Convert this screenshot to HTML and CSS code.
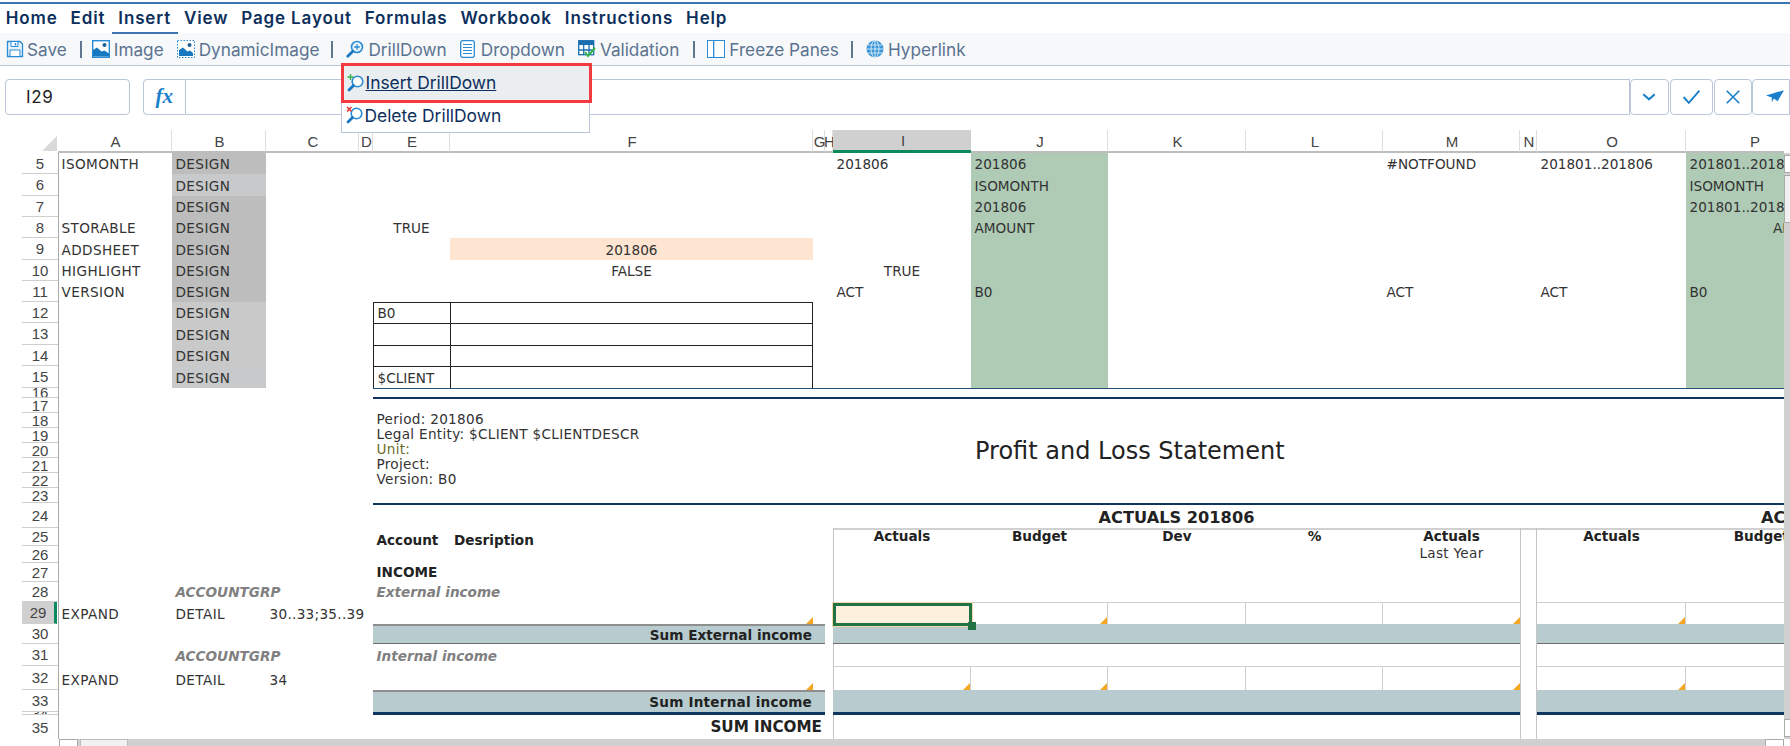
FILE: index.html
```html
<!DOCTYPE html>
<html lang="en">
<head>
<meta charset="utf-8">
<title>Workbook</title>
<link rel="stylesheet" href="styles.css">
</head>
<body>
<div class="app">
  <nav class="menu">
    <span class="menu-item">Home</span>
    <span class="menu-item">Edit</span>
    <span class="menu-item active">Insert</span>
    <span class="menu-item">View</span>
    <span class="menu-item">Page Layout</span>
    <span class="menu-item">Formulas</span>
    <span class="menu-item">Workbook</span>
    <span class="menu-item">Instructions</span>
    <span class="menu-item">Help</span>
  </nav>

  <div class="toolbar">
    <span class="tool t-save"><svg class="ico" viewBox="0 0 18 18"><path d="M1.500 1.500h12.500l2.500 2.500v12.500h-15z" fill="#e8f3fb" stroke="#2a8bd5" stroke-width="1.300"/><path d="M5 2v4.500h7V2" fill="#fff" stroke="#2a8bd5"/><path d="M4 16v-6h10v6" fill="#fff" stroke="#2a8bd5"/><path d="M9.500 3v2.500" stroke="#2a8bd5" stroke-width="1.500"/></svg>Save</span>
    <i class="sep s1"></i>
    <span class="tool t-image"><svg class="ico" viewBox="0 0 18 18"><rect x=".7" y=".7" width="16.600" height="16.600" fill="#fff" stroke="#2a8bd5" stroke-width="1.400"/><path d="M1 16.500V10l4-2.500 4.500 4 3-1 4.500 3v3z" fill="#1878bf"/><circle cx="12.500" cy="5" r="2" fill="#1a5f96"/></svg>Image</span>
    <span class="tool t-dyn"><svg class="ico" viewBox="0 0 18 18"><rect x=".5" y=".5" width="17" height="17" fill="#fff" stroke="#2a8bd5" stroke-dasharray="1.500 1.500"/><path d="M2 16V10l4-2.500 4.500 4 2.500-1 3 2.500v3z" fill="#1878bf"/><circle cx="12.500" cy="5" r="2" fill="#1a5f96"/></svg>DynamicImage</span>
    <i class="sep s2"></i>
    <span class="tool t-drill"><svg class="ico" viewBox="0 0 18 18"><circle cx="11" cy="7" r="5.500" fill="#e8f3fb" stroke="#2a8bd5" stroke-width="1.600"/><path d="M6.800 11.200 1.800 16.200" stroke="#1878bf" stroke-width="2.800" stroke-linecap="round"/><path d="M11 4.200v5.600M8.200 7h5.600" stroke="#2a8bd5" stroke-width="1.300"/></svg>DrillDown
      <div class="drop">
        <div class="drop-item hover"><svg class="ico" viewBox="0 0 18 18"><circle cx="10.500" cy="7.500" r="5.300" fill="#fff" stroke="#2a8bd5" stroke-width="1.600"/><path d="M6.500 11.500 2 16" stroke="#1878bf" stroke-width="2.800" stroke-linecap="round"/><path d="M3.500 0v6M.5 3h6" stroke="#35b44a" stroke-width="1.400"/></svg><span class="ul">Insert DrillDown</span></div>
        <div class="drop-item"><svg class="ico" viewBox="0 0 18 18"><circle cx="10.500" cy="7.500" r="5.300" fill="#fff" stroke="#2a8bd5" stroke-width="1.600"/><path d="M6.500 11.500 2 16" stroke="#1878bf" stroke-width="2.800" stroke-linecap="round"/><path d="M1 1l4.500 4.500M5.500 1 1 5.500" stroke="#e0352b" stroke-width="1.600"/></svg><span>Delete DrillDown</span></div>
      </div>
    </span>
    <span class="tool t-dd"><svg class="ico narrow" viewBox="0 0 15 18"><rect x=".7" y=".7" width="13.600" height="16.600" rx="2" fill="#fff" stroke="#2a8bd5" stroke-width="1.300"/><path d="M3 4.500h9M3 7.500h9M3 10.500h9M3 13.500h9" stroke="#2a8bd5" stroke-width="1.200"/></svg>Dropdown</span>
    <span class="tool t-val"><svg class="ico" viewBox="0 0 18 18"><rect x=".7" y=".7" width="15" height="14" fill="#fff" stroke="#1b6fb0" stroke-width="1.300"/><path d="M1 1h15v4H1z" fill="#1b6fb0"/><path d="M5.700 1v14M11 1v14M1 10h15" stroke="#1b6fb0" stroke-width="1.300"/><path d="M7 12l3 4 7-8" fill="none" stroke="#35b44a" stroke-width="2"/></svg>Validation</span>
    <i class="sep s3"></i>
    <span class="tool t-frz"><svg class="ico" viewBox="0 0 18 18"><rect x=".5" y=".5" width="17" height="17" fill="#fff" stroke="#2a8bd5"/><path d="M6.500 1v16" stroke="#2a8bd5"/><path d="M7.500 1v16" stroke="#bcdcf2"/></svg>Freeze Panes</span>
    <i class="sep s4"></i>
    <span class="tool t-link"><svg class="ico" viewBox="0 0 18 18"><circle cx="9" cy="9" r="8.500" fill="#3b96d8"/><g fill="none" stroke="#d9edf9" stroke-width=".9"><ellipse cx="9" cy="9" rx="4" ry="8.500"/><path d="M9 .5v17M.5 9h17M1.800 5h14.400M1.800 13h14.400"/></g></svg>Hyperlink</span>
  </div>

  <div class="fbar">
    <div class="namebox">I29</div>
    <div class="fx">fx</div>
    <div class="finput"></div>
    <div class="fbtn b1"><svg viewBox="0 0 14 14" class="fi"><path d="M2 4.500l5 4.500 5-4.500" fill="none" stroke="#1a7fcb" stroke-width="1.800"/></svg></div>
    <div class="fbtn b2"><svg viewBox="0 0 18 14" class="fi wide"><path d="M1.500 7l5 5.500L16.500 1" fill="none" stroke="#1a7fcb" stroke-width="1.800"/></svg></div>
    <div class="fbtn b3"><svg viewBox="0 0 14 14" class="fi"><path d="M1.500 1.500l11 11M12.500 1.500l-11 11" fill="none" stroke="#1a7fcb" stroke-width="1.400"/></svg></div>
    <div class="fbtn b4"><svg viewBox="0 0 18 14" class="fi wide"><path d="M0 5.500 17 .5 11 11 7.500 8.500 5.500 12V7.500z" fill="#1a7fcb"/></svg></div>
  </div>

  <div class="sheet">
    <div class="sheet-main">
      <div class="viewport">
        <div class="grid">
          <div class="corner"><i></i></div>
          <div class="ch ca">A</div><div class="ch cb">B</div><div class="ch cc">C</div><div class="ch cd">D</div><div class="ch ce">E</div><div class="ch cf">F</div><div class="ch cg">G</div><div class="ch chh">H</div><div class="ch ci sel"><span>I</span></div><div class="ch cj">J</div><div class="ch ck">K</div><div class="ch cl">L</div><div class="ch cm">M</div><div class="ch cn">N</div><div class="ch co">O</div><div class="ch cp">P</div>

          <div class="rh r5">5</div><div class="rh r6">6</div><div class="rh r7">7</div><div class="rh r8">8</div><div class="rh r9">9</div><div class="rh r10">10</div><div class="rh r11">11</div><div class="rh r12">12</div><div class="rh r13">13</div><div class="rh r14">14</div><div class="rh r15">15</div><div class="rh r16">16</div><div class="rh r17">17</div><div class="rh r18">18</div><div class="rh r19">19</div><div class="rh r20">20</div><div class="rh r21">21</div><div class="rh r22">22</div><div class="rh r23">23</div><div class="rh r24">24</div><div class="rh r25">25</div><div class="rh r26">26</div><div class="rh r27">27</div><div class="rh r28">28</div><div class="rh r29 rsel">29</div><div class="rh r30">30</div><div class="rh r31">31</div><div class="rh r32">32</div><div class="rh r33">33</div><div class="rh r34">34</div><div class="rh r35">35</div>

          <div class="left-rule"></div>

          <div class="fill green cj span-top"></div>
          <div class="fill green cp span-top"></div>
          <div class="fill peach cf r9"></div>

          <div class="c ls ca r5">ISOMONTH</div><div class="c ls ca r8">STORABLE</div><div class="c ls ca r9">ADDSHEET</div><div class="c ls ca r10">HIGHLIGHT</div><div class="c ls ca r11">VERSION</div>

          <div class="c ls cb r5 g1">DESIGN</div><div class="c ls cb r6 g2">DESIGN</div><div class="c ls cb r7 g1">DESIGN</div><div class="c ls cb r8 g1">DESIGN</div><div class="c ls cb r9 g1">DESIGN</div><div class="c ls cb r10 g1">DESIGN</div><div class="c ls cb r11 g1">DESIGN</div><div class="c ls cb r12 g3">DESIGN</div><div class="c ls cb r13 g3">DESIGN</div><div class="c ls cb r14 g3">DESIGN</div><div class="c ls cb r15 g2">DESIGN</div>

          <div class="c ce r8 mid">TRUE</div>
          <div class="c cf r9 mid">201806</div>
          <div class="c cf r10 mid">FALSE</div>
          <div class="c ci r10 mid">TRUE</div>

          <div class="c ci r5">201806</div><div class="c cj r5">201806</div><div class="c cm r5">#NOTFOUND</div><div class="c co r5">201801..201806</div><div class="c cp r5">201801..201806</div>
          <div class="c cj r6">ISOMONTH</div><div class="c cp r6">ISOMONTH</div>
          <div class="c cj r7">201806</div><div class="c cp r7">201801..201806</div>
          <div class="c cj r8">AMOUNT</div><div class="c cp r8 far">AMOUNT</div>
          <div class="c ci r11">ACT</div><div class="c cj r11">B0</div><div class="c cm r11">ACT</div><div class="c co r11">ACT</div><div class="c cp r11">B0</div>

          <div class="c ce r12 box">B0</div><div class="c cf r12 box boxr"></div>
          <div class="c ce r13 box"></div><div class="c cf r13 box boxr"></div>
          <div class="c ce r14 box"></div><div class="c cf r14 box boxr"></div>
          <div class="c ce r15 box">$CLIENT</div><div class="c cf r15 box boxr"></div>
          <div class="rule-thin"></div>
          <div class="rule-thick r16line"></div>

          <div class="c ls3 ce r18 ctr">Period: 201806</div>
          <div class="c ls3 ce r19 ctr">Legal Entity: $CLIENT $CLIENTDESCR</div>
          <div class="c ls3 ce r20 olive">Unit:</div>
          <div class="c ls3 ce r21 ctr">Project:</div>
          <div class="c ls3 ce r22 ctr">Version: B0</div>
          <div class="title">Profit and Loss Statement</div>

          <div class="rule-thick r24line"></div>
          <div class="c act1 r24 b big mid">ACTUALS 201806</div>
          <div class="c cp r24 b big ac2">ACTUALS 201806</div>
          <div class="head-rule"></div>
          <div class="vline vi"></div>
          <div class="vline vn"></div>

          <div class="c ce r25 b low">Account</div>
          <div class="c cf r25 b low acc2">Desription</div>
          <div class="c ci r25 b mid">Actuals</div><div class="c cj r25 b mid">Budget</div><div class="c ck r25 b mid">Dev</div><div class="c cl r25 b mid">%</div><div class="c cm r25 b mid">Actuals</div>
          <div class="c ls3 cm r26 mid">Last Year</div>
          <div class="c co r25 b mid">Actuals</div><div class="c cp r25 b mid bud2">Budget</div>

          <div class="c ce r27 b">INCOME</div>
          <div class="c ce-f r28 bi">External income</div>
          <div class="c cb-c r28 bi">ACCOUNTGRP</div>

          <div class="c ls ca r29">EXPAND</div><div class="c ls cb r29">DETAIL</div><div class="c ls3 cc r29">30..33;35..39</div>
          <div class="tick cf r29"></div>
          <div class="selcell ci r29"></div>
          <div class="entry cj r29 tri"></div><div class="entry ck r29"></div><div class="entry cl r29"></div><div class="entry cm r29 noedge tri"></div><div class="entry co r29 tri"></div><div class="entry cp r29"></div>

          <div class="bar e-g r30 graytop"><b>Sum External income</b></div>
          <div class="bar i-m r30"></div>
          <div class="bar co-p r30"></div>

          <div class="c ce-f r31 bi">Internal income</div>
          <div class="c cb-c r31 bi">ACCOUNTGRP</div>

          <div class="c ls ca r32">EXPAND</div><div class="c ls cb r32">DETAIL</div><div class="c ls3 cc r32">34</div>
          <div class="tick cf r32"></div>
          <div class="entry ci r32 tri"></div><div class="entry cj r32 tri"></div><div class="entry ck r32"></div><div class="entry cl r32"></div><div class="entry cm r32 noedge tri"></div><div class="entry co r32 tri"></div><div class="entry cp r32"></div>

          <div class="bar e-g r33 graytop navyb"><b class="sumi">Sum Internal income</b></div>
          <div class="bar i-m r33 navyb"></div>
          <div class="bar co-p r33 navyb"></div>

          <div class="c e-g r35 b sum">SUM INCOME</div>
        </div>
      </div>
      <div class="hbar"><i class="sb-btn"></i><i class="sb-thumb"></i><i class="sb-btn end"></i></div>
    </div>
    <div class="vbar"><i class="vb-btn"></i><i class="vb-thumb"></i><i class="vb-btn end"></i></div>
  </div>
</div>
</body>
</html>
```

FILE: styles.css
```css
* { box-sizing: border-box; }
html, body { margin: 0; height: 100%; overflow: hidden; background: #fff; }
.app { height: 746px; width: 1790px; overflow: hidden; font-family: Inter, "Liberation Sans", sans-serif; padding-top: 2px; }

/* menu */
.menu { height: 31px; border-top: 2px solid #3c74b4; display: flex; font-weight: 600; font-size: 17px; letter-spacing: .85px; color: #0d2f5c; }
.menu-item { padding: 0 6.500px; height: 30px; line-height: 29px; }
.menu-item:first-child { padding-left: 5.800px; }
.menu-item.active { border-bottom: 2px solid #3c74b4; }

/* toolbar */
.toolbar { height: 33px; background: #f6f8fa; border-bottom: 1px solid #b9c5d8; display: flex; align-items: center; font-size: 17.200px; color: #5b7390; }
.tool { display: flex; align-items: center; gap: 4px; position: relative; white-space: nowrap; }
.ico { width: 18px; height: 18px; flex: none; }
.ico.narrow { width: 15px; }
.sep { width: 2px; height: 17px; background: #5f7790; flex: none; }
.t-save { margin-left: 6px; gap: 3px; }
.s1 { margin-left: 13px; }
.t-image { margin-left: 10px; }
.t-dyn { margin-left: 13px; }
.s2 { margin-left: 12px; }
.t-drill { margin-left: 13px; }
.t-dd { margin-left: 13px; gap: 6px; }
.t-val { margin-left: 13px; }
.s3 { margin-left: 14px; }
.t-frz { margin-left: 12px; }
.s4 { margin-left: 12px; }
.t-link { margin-left: 13px; }

/* dropdown */
.drop { position: absolute; left: -5px; top: 24px; width: 249px; height: 70px; background: #fff; border: 1px solid #b9c5d8; z-index: 10; color: #0d2f5c; font-size: 17.400px; }
.drop-item { height: 30px; display: flex; align-items: center; padding: 0 0 5px 4px; gap: 0; }
.drop-item.hover { height: 40px; margin: -1px -3px 0 -1px; background: #ebeef1; border: 3px solid #f4393f; padding: 0 0 0 3px; }
.ul { text-decoration: underline; }

/* formula bar */
.fbar { height: 36px; margin-top: 13px; display: flex; padding-left: 5px; }
.namebox { width: 125px; border: 1px solid #b9c5d8; border-radius: 4px; padding-left: 20px; line-height: 34px; font-size: 17px; letter-spacing: .6px; color: #222; }
.fx { width: 43px; margin-left: 13px; border: 1px solid #b9c5d8; border-radius: 4px 0 0 4px; text-align: center; line-height: 32px; font-family: "Liberation Serif", serif; font-style: italic; font-weight: 700; font-size: 21px; color: #1a7fcb; }
.finput { width: 1448px; border: 1px solid #b9c5d8; border-left: 0; }
.fbtn { border: 1px solid #b9c5d8; border-radius: 4px; display: flex; align-items: center; justify-content: center; flex: none; }
.b1 { width: 39px; }
.b2 { width: 43px; margin-left: 1px; }
.b3 { width: 38px; margin-left: 1px; }
.b4 { width: 38px; border-radius: 4px 0 0 4px; justify-content: flex-start; padding-left: 13px; }
.fi { width: 16px; height: 16px; }
.fi.wide { width: 19px; }

/* sheet */
.sheet { margin-top: 15px; display: flex; height: 616px; }
.sheet-main { width: 1784px; flex: none; }
.viewport { height: 609px; overflow: hidden; padding-left: 22px; }
.grid {
  display: grid; font-family: "DejaVu Sans", sans-serif; font-size: 13.600px; color: #333;
  grid-template-columns: [rh] 36px [a] 114px [b] 94px [c] 93px [d] 14px [e] 77px [f] 363px [g] 12px [h] 8px [i] 138px [j] 137px [k] 138px [l] 137px [m] 137px [n] 17px [o] 149px [p] 137px [end];
  grid-template-rows: [hd] 23px [r5] 21px [r6] 22px [r7] 21px [r8] 21px [r9] 22px [r10] 21px [r11] 21px [r12] 21px [r13] 22px [r14] 21px [r15] 22px [r16] 10px [r17] 15px [r18] 15px [r19] 15px [r20] 15px [r21] 15px [r22] 15px [r23] 15px [r24] 25px [r25] 18px [r26] 17px [r27] 19px [r28] 20px [r29] 22px [r30] 20px [r31] 22px [r32] 24px [r33] 22px [r34] 3px [r35] 25px [last];
}

.ca { grid-column: a; } .cb { grid-column: b; } .cc { grid-column: c; } .cd { grid-column: d; } .ce { grid-column: e; } .cf { grid-column: f; } .cg { grid-column: g; } .chh { grid-column: h; } .ci { grid-column: i; } .cj { grid-column: j; } .ck { grid-column: k; } .cl { grid-column: l; } .cm { grid-column: m; } .cn { grid-column: n; } .co { grid-column: o; } .cp { grid-column: p; }
.ce-f { grid-column: e / g; } .e-g { grid-column: e / h; } .i-m { grid-column: i / n; } .co-p { grid-column: o / end; } .cb-c { grid-column: b / d; } .act1 { grid-column: i / n; }

.r5 { grid-row: r5; } .r6 { grid-row: r6; } .r7 { grid-row: r7; } .r8 { grid-row: r8; } .r9 { grid-row: r9; } .r10 { grid-row: r10; } .r11 { grid-row: r11; } .r12 { grid-row: r12; } .r13 { grid-row: r13; } .r14 { grid-row: r14; } .r15 { grid-row: r15; } .r16 { grid-row: r16; } .r17 { grid-row: r17; } .r18 { grid-row: r18; } .r19 { grid-row: r19; } .r20 { grid-row: r20; } .r21 { grid-row: r21; } .r22 { grid-row: r22; } .r23 { grid-row: r23; } .r24 { grid-row: r24; } .r25 { grid-row: r25; } .r26 { grid-row: r26; } .r27 { grid-row: r27; } .r28 { grid-row: r28; } .r29 { grid-row: r29; } .r30 { grid-row: r30; } .r31 { grid-row: r31; } .r32 { grid-row: r32; } .r33 { grid-row: r33; } .r34 { grid-row: r34; } .r35 { grid-row: r35; }

/* headers */
.corner { grid-column: rh; grid-row: hd; display: flex; justify-content: flex-end; align-items: flex-end; padding: 0 1px 2px 0; }
.corner i { width: 15px; height: 15px; background: #d9d9d9; clip-path: polygon(100% 0, 100% 100%, 0 100%); }
.ch { grid-row: hd; display: flex; align-items: center; justify-content: center; padding: 1px 0 0 2px; font: 15px "Liberation Sans", sans-serif; color: #444; border-right: 1px solid #dedede; border-bottom: 2px solid #bdbdbd; overflow: visible; white-space: nowrap; }
.ch.sel { background: #d0d0d0; border-bottom: 3px solid #0c8a5b; border-right: 0; }
.rh { grid-column: rh; display: flex; align-items: center; justify-content: center; font: 15px/15px "Liberation Sans", sans-serif; color: #444; border-bottom: 1px solid #cfcfcf; overflow: hidden; }
.rsel { background: #d0d0d0; border-right: 3px solid #0c8a5b; margin-right: 1px; padding-right: 0; }
.left-rule { grid-column: a; grid-row: r5 / last; border-left: 1px solid #a9a9a9; }

/* cells */
.c { display: flex; align-items: flex-end; padding: 0 3.500px 2px; line-height: 16px; white-space: nowrap; }
.ls { letter-spacing: .4px; }
.ls3 { letter-spacing: .3px; }
.mid { justify-content: center; }
.ctr { align-items: center; padding-bottom: 4px; }
.olive { color: #6b6b2c; line-height: 14px; }
.far { padding-left: 87px; }
.b { font-weight: 700; color: #222; }
.big { font-size: 16.200px; }
.bi { font-weight: 700; font-style: italic; color: #808080; }
.low { line-height: 12px; padding-bottom: 0; }
.acc2 { padding-left: 4px; }
.ac2 { padding-left: 75px; }
.bud2 { padding-left: 17px; }
.sum { justify-content: flex-end; padding: 0 3px 5px 0; font-size: 15.200px; }
.fill { min-width: 0; }
.green { background: #afcbb6; }
.peach { background: #fde5d2; }
.span-top { grid-row: r5 / r16; }
.g1 { background: #bdbdbd; }
.g2 { background: #c8c9cb; }
.g3 { background: #c9c9c9; }
.box { border-left: 1px solid #222; border-top: 1px solid #222; }
.boxr { border-right: 1px solid #222; }
.rule-thin { grid-column: e / end; grid-row: r16; height: 1px; background: #1f4e79; }
.rule-thick { grid-column: e / end; height: 2px; background: #10355f; }
.r16line { grid-row: r17; align-self: start; margin-top: -1px; }
.r24line { grid-row: r24; align-self: start; }
.title { grid-column: j / end; grid-row: r19 / r22; display: flex; align-items: center; padding-left: 4px; font-size: 24px; color: #222; white-space: nowrap; }
.head-rule { grid-column: i / end; grid-row: r25; height: 2px; background: #d0d0d0; }
.vline { grid-row: r25 / last; }
.vi { grid-column: i; border-left: 1px solid #c4c4c4; }
.vn { grid-column: n; border-left: 1px solid #c4c4c4; border-right: 1px solid #c4c4c4; z-index: 1; }

.entry { border-top: 1px solid #d0d0d0; border-right: 1px solid #cfcfcf; position: relative; }
.entry.noedge { border-right: 0; }
.tri::after, .tick::after { content: ""; position: absolute; right: 0; bottom: 0; width: 7px; height: 7px; background: #f5a623; clip-path: polygon(100% 0, 100% 100%, 0 100%); }
.tick { position: relative; }
.selcell { position: relative; background: #fdf0dd; border: 3px solid #217346; margin: 1px -1px -2px 0; z-index: 3; box-shadow: 0 0 0 1px #f5d9a8; }
.selcell::after { content: ""; position: absolute; right: -7px; bottom: -7px; width: 8px; height: 8px; background: #217346; }
.bar { background: #b8cccf; border-bottom: 1px solid #6e6e6e; display: flex; align-items: flex-end; justify-content: flex-end; padding-right: 13px; color: #222; line-height: 16px; white-space: nowrap; }
.bar b { font-weight: 700; }
.bar b.sumi { letter-spacing: .2px; padding-bottom: 2px; }
.graytop { border-top: 2px solid #8e8e8e; }
.navyb { border-bottom: 3px solid #10355f; margin-bottom: -3px; }

/* scrollbars */
.hbar { height: 7px; margin-left: 59px; background: #d0d0d0; display: flex; overflow: hidden; align-items: flex-start; }
.sb-btn { width: 19px; height: 10px; background: #fff; border: 1px solid #a9a9a9; flex: none; }
.sb-btn.end { margin-left: auto; margin-right: 0; }
.sb-thumb { width: 48px; height: 10px; margin-left: 2px; background: #f1f1f1; border: 1px solid #bdbdbd; flex: none; }
.vbar { width: 6px; margin-top: 23px; height: 586px; background: #d0d0d0; display: flex; flex-direction: column; overflow: hidden; }
.vb-btn { width: 10px; height: 18px; margin-top: 2px; background: #fff; border: 1px solid #a9a9a9; flex: none; }
.vb-btn.end { margin-top: auto; margin-bottom: 2px; }
.vb-thumb { width: 10px; height: 48px; margin-top: 2px; background: #f1f1f1; border: 1px solid #a9a9a9; flex: none; }
```
